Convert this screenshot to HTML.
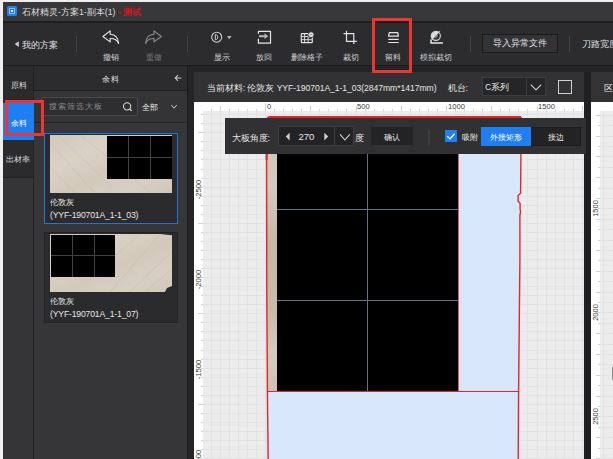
<!DOCTYPE html>
<html><head><meta charset="utf-8">
<style>
*{margin:0;padding:0;box-sizing:border-box}
html,body{width:613px;height:459px;overflow:hidden;background:#efefef;font-family:"Liberation Sans",sans-serif;}
.a{position:absolute}
.t{position:absolute;white-space:nowrap;color:#e6e6e6}
.ic{position:absolute;overflow:visible}
.rl{font-size:7.6px;line-height:9px;color:#3a3a3a}
.rv{transform:rotate(-90deg);transform-origin:center center}
</style></head><body>
<div class="a" style="left:3px;top:2px;width:610px;height:457px;background:#2b2b2b"></div>
<div class="a" style="left:3px;top:2px;width:610px;height:19px;background:#38383a"></div>
<div class="a" style="left:7px;top:6px;width:10px;height:10px;background:#1e82f5;border-radius:1.5px"></div>
<div class="a" style="left:8.8px;top:8px;width:6.6px;height:5.8px;border:1px solid #86bbff"></div>
<div class="a" style="left:10.8px;top:10px;width:2.6px;height:2.2px;background:#ffffff"></div>
<div class="t" style="left:22px;top:6.8px;font-size:8.8px;line-height:10.8px;color:#dcdcdc;">石材精灵-方案1-副本(1) <span style="color:#d2161c;font-weight:bold">- 测试</span></div>
<div class="a" style="left:3px;top:21px;width:610px;height:2px;background:#1e1e1e"></div>
<div class="a" style="left:3px;top:23px;width:610px;height:42px;background:#2c2c2e"></div>
<svg class="ic" style="left:0;top:0" width="613" height="70" viewBox="0 0 613 70" fill="none" stroke-linejoin="round"><path d="M18.8 41.2 V46.9 L14.8 44.05 Z" fill="#d0d0d0"/></svg>
<div class="t" style="left:22px;top:39.6px;font-size:8.8px;line-height:10.8px;color:#e0e0e0;">我的方案</div>
<div class="a" style="left:76px;top:36px;width:1px;height:16px;background:#444446"></div>
<div class="a" style="left:187px;top:36px;width:1px;height:16px;background:#444446"></div>
<div class="a" style="left:470px;top:36px;width:1px;height:16px;background:#444446"></div>
<div class="a" style="left:569px;top:36px;width:1px;height:16px;background:#444446"></div>
<div class="t" style="left:51.2px;width:120px;text-align:center;top:52.6px;font-size:7.6px;line-height:9.6px;color:#d0d0d0;">撤销</div>
<div class="t" style="left:94px;width:120px;text-align:center;top:52.6px;font-size:7.6px;line-height:9.6px;color:#777;">重做</div>
<div class="t" style="left:162.3px;width:120px;text-align:center;top:52.6px;font-size:7.6px;line-height:9.6px;color:#d0d0d0;">显示</div>
<div class="t" style="left:204.2px;width:120px;text-align:center;top:52.6px;font-size:7.6px;line-height:9.6px;color:#d0d0d0;">放回</div>
<div class="t" style="left:247.3px;width:120px;text-align:center;top:52.6px;font-size:7.6px;line-height:9.6px;color:#d0d0d0;">删除格子</div>
<div class="t" style="left:290.5px;width:120px;text-align:center;top:52.6px;font-size:7.6px;line-height:9.6px;color:#d0d0d0;">裁切</div>
<div class="t" style="left:333.3px;width:120px;text-align:center;top:52.6px;font-size:7.6px;line-height:9.6px;color:#d0d0d0;">留料</div>
<div class="t" style="left:375.9px;width:120px;text-align:center;top:52.6px;font-size:7.6px;line-height:9.6px;color:#d0d0d0;">模拟裁切</div>
<svg class="ic" style="left:0;top:0" width="613" height="70" viewBox="0 0 613 70" fill="none" stroke-linejoin="round">
<path d="M110.2 30.9 L102.9 36.5 L110.2 41.9 V38.5 C114.5 38.3 117 40 118.6 43.4 C118 37.5 114.8 34.5 110.2 34.3 Z" stroke="#e4e4e4" stroke-width="1.15"/>
<path transform="translate(264.2 0) scale(-1 1)" d="M110.2 30.9 L102.9 36.5 L110.2 41.9 V38.5 C114.5 38.3 117 40 118.6 43.4 C118 37.5 114.8 34.5 110.2 34.3 Z" stroke="#8c8c8c" stroke-width="1.15"/>
<circle cx="216.7" cy="37.2" r="5" stroke="#cfcfcf" stroke-width="1.1"/>
<path d="M215.3 34.6 V39.8 C218.6 39.8 218.6 34.6 215.3 34.6 Z" stroke="#cfcfcf" stroke-width="1"/>
<path d="M226.9 35.9 H231.6 L229.25 39.3 Z" fill="#b0b0b0"/>
<path d="M258.4 33.8 V31.3 H270.5 V43.2 H258.4 V38.8" stroke="#e4e4e4" stroke-width="1.2"/>
<path d="M259 36.2 H265" stroke="#b8b8b8" stroke-width="2"/>
<path d="M264.5 33.3 L268.3 36.2 L264.5 39.1 Z" fill="#b8b8b8"/>
<rect x="301.3" y="33.7" width="11" height="9" rx="0.8" stroke="#e4e4e4" stroke-width="1.2"/>
<path d="M301.3 36.6 H312.3 M301.3 39.7 H312.3 M304.6 33.7 V42.7 M308.2 33.7 V42.7" stroke="#e4e4e4" stroke-width="0.9"/>
<circle cx="311.1" cy="34.7" r="2.9" fill="#e4e4e4" stroke="#2c2c2e" stroke-width="0.8"/>
<path d="M309.8 34.7 H312.4" stroke="#8a8a8a" stroke-width="0.9"/>
<path d="M346.5 30.8 V41.3 H356.9 M343.5 33.7 H353.8 V44" stroke="#e4e4e4" stroke-width="1.2" stroke-linejoin="miter"/>
<path d="M389.3 32.5 H397.7 L398.4 36.2 H388.6 Z" stroke="#e4e4e4" stroke-width="1.25"/>
<path d="M388.3 39.4 H398.7 M388.3 42.5 H398.7" stroke="#e4e4e4" stroke-width="1.2"/>
<path d="M439.3 32.3 A5 5 0 0 0 432.3 39.3 Z" fill="#e0e0e0"/>
<circle cx="435.8" cy="35.8" r="4.6" stroke="#d8d8d8" stroke-width="1.1"/>
<circle cx="435.8" cy="35.8" r="1.4" stroke="#bdbdbd" stroke-width="0.9"/>
<path d="M431.5 40.3 L439.9 30.9" stroke="#cfcfcf" stroke-width="0.9"/>
<path d="M431 39.5 V42.9 H442.9" stroke="#e4e4e4" stroke-width="1.5"/>
</svg>
<div class="a" style="left:482px;top:34px;width:76px;height:19px;background:#333335;border:1px solid #1b1b1b;border-radius:1px"></div>
<div class="t" style="left:459.6px;width:120px;text-align:center;top:38px;font-size:8.7px;line-height:10.7px;color:#e0e0e0;">导入异常文件</div>
<div class="t" style="left:582px;top:39px;font-size:9px;line-height:11px;color:#e6e6e6;">刀路宽度</div>
<div class="a" style="left:3px;top:65px;width:610px;height:1px;background:#1c1c1c"></div>
<div class="a" style="left:3px;top:66px;width:30px;height:393px;background:#353537"></div>
<div class="a" style="left:3px;top:66px;width:30px;height:111px;background:#2b2b2d"></div>
<div class="a" style="left:3px;top:177px;width:30px;height:1px;background:#202022"></div>
<div class="a" style="left:33px;top:66px;width:1px;height:393px;background:#222224"></div>
<div class="t" style="left:-41.5px;width:120px;text-align:center;top:81px;font-size:8px;line-height:10px;color:#dcdcdc;">原料</div>
<div class="a" style="left:3px;top:103px;width:31px;height:37px;background:#1e7ef2"></div>
<div class="t" style="left:-41.5px;width:120px;text-align:center;top:118.5px;font-size:8px;line-height:10px;color:#ffffff;">余料</div>
<div class="t" style="left:-41.7px;width:120px;text-align:center;top:155.2px;font-size:8px;line-height:10px;color:#dcdcdc;">出材率</div>
<div class="a" style="left:34px;top:66px;width:153px;height:393px;background:#363638"></div>
<div class="a" style="left:34px;top:66px;width:153px;height:24px;background:#2c2c2e"></div>
<div class="a" style="left:34px;top:90px;width:153px;height:1px;background:#1e1e1e"></div>
<div class="t" style="left:51.3px;width:120px;text-align:center;top:74.3px;font-size:8.3px;line-height:10.3px;color:#e0e0e0;letter-spacing:1px">余料</div>
<div class="a" style="left:34px;top:91px;width:153px;height:31px;background:#343436"></div>
<div class="a" style="left:41px;top:97px;width:97px;height:19px;border:1px solid #4a4a4c;border-radius:2px;background:#2e2e30"></div>
<div class="t" style="left:49.3px;top:101.3px;font-size:8.3px;line-height:10.3px;color:#8a8a8a;letter-spacing:0.85px">搜索筛选大板</div>
<div class="t" style="left:141.7px;top:101.8px;font-size:8.3px;line-height:10.3px;color:#e6e6e6;letter-spacing:0.6px">全部</div>
<div class="a" style="left:34px;top:122px;width:153px;height:1px;background:#252527"></div>
<svg class="ic" style="left:0;top:0" width="200" height="130" viewBox="0 0 200 130" fill="none"><path d="M181.4 78 H175.5 M178 75.2 L175.2 78 L178 80.8" stroke="#c8c8c8" stroke-width="1.1"/><circle cx="127.1" cy="106.3" r="3.6" stroke="#e0e0e0" stroke-width="1.05"/><path d="M129.8 109 L131.7 110.9" stroke="#e0e0e0" stroke-width="1.2"/><path d="M171.3 105 L174 108.2 L176.8 105" stroke="#c8c8c8" stroke-width="1"/></svg>
<div class="a" style="left:187px;top:66px;width:7px;height:393px;background:#252527"></div>
<div class="a" style="left:187px;top:66px;width:1px;height:393px;background:#1b1b1b"></div>
<div class="a" style="left:44px;top:133px;width:134px;height:91px;background:#2b2b2d;border:1px solid #1f72e0"></div>
<svg class="a" style="left:50px;top:135px" width="122" height="58" viewBox="0 0 122 58"><defs><linearGradient id="mg1" x1="0" y1="0" x2="1" y2="1"><stop offset="0" stop-color="#d3c9bb"/><stop offset="0.3" stop-color="#dad2c6"/><stop offset="0.55" stop-color="#d3c9bb"/><stop offset="0.8" stop-color="#d8cfc3"/><stop offset="1" stop-color="#d0c6b8"/></linearGradient></defs><rect width="122" height="58" fill="url(#mg1)"/><path d="M0 8 L45 58 M8 0 L62 52.2 M30 0 L70 31.900000000000002 M55 17.4 L100 58 M80 0 L122 34.8 M0 31.900000000000002 L25 58" stroke="#b3a694" stroke-width="0.7" opacity="0.35" fill="none"/></svg>
<div class="a" style="left:107px;top:136px;width:65px;height:43px;background:#000"></div>
<div class="a" style="left:128px;top:136px;width:1px;height:43px;background:#43433b"></div>
<div class="a" style="left:150px;top:136px;width:1px;height:43px;background:#43433b"></div>
<div class="a" style="left:107px;top:157px;width:65px;height:1px;background:#43433b"></div>
<div class="t" style="left:50.3px;top:198px;font-size:8px;line-height:10px;color:#e6e6e6;">伦敦灰</div>
<div class="t" style="left:50px;top:209.5px;font-size:8.7px;line-height:10.7px;color:#e6e6e6;letter-spacing:-0.2px">(YYF-190701A_1-1_03)</div>
<div class="a" style="left:44px;top:232px;width:134px;height:91px;background:#2b2b2d;border:1px solid #222224"></div>
<svg class="a" style="left:50px;top:234px" width="122" height="58" viewBox="0 0 122 58"><defs><linearGradient id="mg2" x1="0" y1="0" x2="1" y2="1"><stop offset="0" stop-color="#d3c9bb"/><stop offset="0.3" stop-color="#dad2c6"/><stop offset="0.55" stop-color="#d3c9bb"/><stop offset="0.8" stop-color="#d8cfc3"/><stop offset="1" stop-color="#d0c6b8"/></linearGradient></defs><rect width="122" height="58" fill="url(#mg2)"/><path d="M60 58 L110 0 M80 58 L122 17.4 M0 40.599999999999994 L40 17.4 M95 58 L122 34.8 M50 34.8 L90 0" stroke="#b3a694" stroke-width="0.7" opacity="0.35" fill="none"/><path d="M115 58 L117 54 L122 52 L122 58 Z" fill="#2b2b2d"/><path d="M110 0 L122 0 L122 1.2 Z" fill="#2b2b2d"/></svg>
<div class="a" style="left:51px;top:235px;width:64px;height:42px;background:#000"></div>
<div class="a" style="left:72px;top:235px;width:1px;height:42px;background:#43433b"></div>
<div class="a" style="left:94px;top:235px;width:1px;height:42px;background:#43433b"></div>
<div class="a" style="left:51px;top:255px;width:64px;height:1px;background:#43433b"></div>
<div class="t" style="left:50.3px;top:297px;font-size:8px;line-height:10px;color:#e6e6e6;">伦敦灰</div>
<div class="t" style="left:50px;top:308.5px;font-size:8.7px;line-height:10.7px;color:#e6e6e6;letter-spacing:-0.2px">(YYF-190701A_1-1_07)</div>
<div class="a" style="left:194px;top:66px;width:419px;height:6px;background:#242426"></div>
<svg class="a" style="left:194px;top:102px" width="390" height="357" viewBox="0 0 390 357" shape-rendering="crispEdges">
<rect x="0" y="0" width="390" height="357" fill="#ffffff"/>
<rect x="9" y="9" width="381" height="348" fill="#ececec"/>
<path d="M17.5 9V357M26.5 9V357M35.5 9V357M44.5 9V357M53.5 9V357M62.5 9V357M71.5 9V357M80.5 9V357M89.5 9V357M98.5 9V357M107.5 9V357M116.5 9V357M125.5 9V357M134.5 9V357M143.5 9V357M152.5 9V357M162.5 9V357M171.5 9V357M180.5 9V357M189.5 9V357M198.5 9V357M207.5 9V357M216.5 9V357M225.5 9V357M234.5 9V357M243.5 9V357M252.5 9V357M261.5 9V357M270.5 9V357M279.5 9V357M288.5 9V357M297.5 9V357M306.5 9V357M315.5 9V357M324.5 9V357M333.5 9V357M343.5 9V357M352.5 9V357M361.5 9V357M370.5 9V357M379.5 9V357M388.5 9V357M9 12.5H390M9 21.5H390M9 30.5H390M9 39.5H390M9 48.5H390M9 57.5H390M9 67.5H390M9 76.5H390M9 85.5H390M9 94.5H390M9 103.5H390M9 112.5H390M9 121.5H390M9 130.5H390M9 139.5H390M9 148.5H390M9 157.5H390M9 166.5H390M9 175.5H390M9 184.5H390M9 193.5H390M9 202.5H390M9 211.5H390M9 220.5H390M9 229.5H390M9 238.5H390M9 248.5H390M9 257.5H390M9 266.5H390M9 275.5H390M9 284.5H390M9 293.5H390M9 302.5H390M9 311.5H390M9 320.5H390M9 329.5H390M9 338.5H390M9 347.5H390M9 356.5H390" stroke="#e3e3e3" stroke-width="1" fill="none"/>
<path d="M17.5 7V9M26.5 4V9M35.5 7V9M44.5 7V9M53.5 7V9M62.5 7V9M71.5 1V9M80.5 7V9M89.5 7V9M98.5 7V9M107.5 7V9M116.5 4V9M125.5 7V9M134.5 7V9M143.5 7V9M152.5 7V9M162.5 4V9M171.5 7V9M180.5 7V9M189.5 7V9M198.5 7V9M207.5 4V9M216.5 7V9M225.5 7V9M234.5 7V9M243.5 7V9M252.5 4V9M261.5 7V9M270.5 7V9M279.5 7V9M288.5 7V9M297.5 4V9M306.5 7V9M315.5 7V9M324.5 7V9M333.5 7V9M343.5 4V9M352.5 7V9M361.5 7V9M370.5 7V9M379.5 7V9M388.5 4V9M7 12.5H9M7 21.5H9M4 30.5H9M7 39.5H9M7 48.5H9M7 57.5H9M7 67.5H9M7 76.5H9M7 85.5H9M7 94.5H9M7 103.5H9M7 112.5H9M4 121.5H9M7 130.5H9M7 139.5H9M7 148.5H9M7 157.5H9M7 166.5H9M7 175.5H9M7 184.5H9M7 193.5H9M7 202.5H9M4 211.5H9M7 220.5H9M7 229.5H9M7 238.5H9M7 248.5H9M7 257.5H9M7 266.5H9M7 275.5H9M7 284.5H9M7 293.5H9M4 302.5H9M7 311.5H9M7 320.5H9M7 329.5H9M7 338.5H9M7 347.5H9M7 356.5H9" stroke="#d4d4d4" stroke-width="1" fill="none"/>
</svg>
<div class="a" style="left:267px;top:117px;width:253px;height:342px;background:#d8e7f9"></div>
<svg class="a" style="left:267px;top:117px" width="10" height="274" viewBox="0 0 10 274"><defs><linearGradient id="bs" x1="0" y1="0" x2="0" y2="1"><stop offset="0" stop-color="#cfc4b6"/><stop offset="0.25" stop-color="#d4cabd"/><stop offset="0.45" stop-color="#c4b8a8"/><stop offset="0.7" stop-color="#c6baaa"/><stop offset="0.86" stop-color="#d4cabd"/><stop offset="1" stop-color="#cdc3b5"/></linearGradient></defs><rect width="10" height="274" fill="url(#bs)"/></svg>
<div class="a" style="left:277px;top:117px;width:181px;height:274px;background:#000"></div>
<div class="a" style="left:458px;top:117px;width:1px;height:274px;background:#ea5a60"></div>
<div class="a" style="left:367px;top:117px;width:1px;height:274px;background:#63718a"></div>
<div class="a" style="left:277px;top:209px;width:181px;height:1px;background:#63718a"></div>
<div class="a" style="left:277px;top:300px;width:181px;height:1px;background:#63718a"></div>
<div class="a" style="left:267px;top:391px;width:252px;height:1px;background:#e9222c"></div>
<svg class="a" style="left:0;top:0" width="613" height="459" viewBox="0 0 613 459" fill="none"><path d="M268.2 459 L267.5 400 L266.8 300 L266.6 160 L266.6 121.5 Q266.6 117 271 117 L521 117" stroke="#e9222c" stroke-width="1.4"/><path d="M266.6 160 L266.6 121.5 Q266.6 117 271 117 L521 117" stroke="#e9222c" stroke-width="2"/><path d="M521.2 117 L520.6 193.2 L518.1 195.6 L518.1 201.3 L520.1 203.3 L520.1 209 L520.6 212 L519.9 215 L519.9 260 L518.6 390 L518.2 459" stroke="#e9222c" stroke-width="1.4"/></svg>
<div class="a" style="left:194px;top:72px;width:390px;height:30px;background:#323234"></div>
<div class="t" style="left:207px;top:83px;font-size:8.6px;line-height:10.6px;color:#e6e6e6;letter-spacing:-0.05px">当前材料: 伦敦灰 YYF-190701A_1-1_03(2847mm*1417mm)</div>
<div class="t" style="left:447.5px;top:83px;font-size:8.6px;line-height:10.6px;color:#e6e6e6;">机台:</div>
<div class="a" style="left:482px;top:77px;width:64px;height:19px;background:#252527;border:1px solid #3c3c3e"></div>
<div class="a" style="left:526px;top:77px;width:1px;height:19px;background:#3c3c3e"></div>
<div class="t" style="left:485px;top:82px;font-size:8.6px;line-height:10.6px;color:#e6e6e6;">C系列</div>
<svg class="ic" style="left:0;top:0" width="613" height="100" viewBox="0 0 613 100" fill="none"><path d="M530.8 84.6 L536 89.9 L541.2 84.6" stroke="#d0d0d0" stroke-width="1.1"/></svg>
<div class="a" style="left:558px;top:80.3px;width:13.6px;height:13.6px;border:1.5px solid #cfcfcf"></div>
<div class="a" style="left:584px;top:72px;width:7px;height:387px;background:#202022"></div>
<svg class="a" style="left:591px;top:102px" width="22" height="357" viewBox="0 0 22 357" shape-rendering="crispEdges">
<rect x="0" y="0" width="22" height="357" fill="#ffffff"/>
<rect x="9" y="9" width="13" height="348" fill="#ececec"/>
<path d="M12.5 9V357M9 13.5H22M9 23.5H22M9 34.5H22M9 44.5H22M9 54.5H22M9 65.5H22M9 75.5H22M9 86.5H22M9 96.5H22M9 106.5H22M9 117.5H22M9 127.5H22M9 138.5H22M9 148.5H22M9 158.5H22M9 169.5H22M9 179.5H22M9 190.5H22M9 200.5H22M9 210.5H22M9 221.5H22M9 231.5H22M9 242.5H22M9 252.5H22M9 262.5H22M9 273.5H22M9 283.5H22M9 294.5H22M9 304.5H22M9 314.5H22M9 325.5H22M9 335.5H22M9 346.5H22M9 356.5H22" stroke="#e3e3e3" stroke-width="1" fill="none"/>
<path d="M5 13.5H9M7 23.5H9M5 34.5H9M7 44.5H9M5 54.5H9M7 65.5H9M5 75.5H9M7 86.5H9M5 96.5H9M7 106.5H9M5 117.5H9M7 127.5H9M7 138.5H9M5 148.5H9M7 158.5H9M5 169.5H9M7 179.5H9M5 190.5H9M7 200.5H9M5 210.5H9M7 221.5H9M5 231.5H9M7 242.5H9M5 252.5H9M7 262.5H9M5 273.5H9M7 283.5H9M5 294.5H9M7 304.5H9M5 314.5H9M7 325.5H9M5 335.5H9M7 346.5H9M5 356.5H9" stroke="#d4d4d4" stroke-width="1" fill="none"/>
<rect x="21" y="265" width="1.5" height="13" fill="#8a8a8a"/>
</svg>
<div class="a" style="left:591px;top:72px;width:22px;height:30px;background:#333335"></div>
<div class="t" style="left:603.6px;top:82.8px;font-size:8.8px;line-height:10.8px;color:#e6e6e6;">区域</div>
<div class="t rl" style="left:267px;top:102px">0</div>
<div class="t rl" style="left:357px;top:102px">500</div>
<div class="t rl" style="left:448px;top:102px">1000</div>
<div class="t rl" style="left:538px;top:102px">1500</div>
<div class="t rl rv" style="left:168.2px;width:60px;text-align:center;top:185.1px">-2500</div>
<div class="t rl rv" style="left:168.2px;width:60px;text-align:center;top:275.1px">-2000</div>
<div class="t rl rv" style="left:168.2px;width:60px;text-align:center;top:365.1px">-1500</div>
<div class="t rl rv" style="left:168.2px;width:60px;text-align:center;top:455.1px">-1000</div>
<div class="t rl rv" style="left:565px;width:60px;text-align:center;top:203.6px;font-size:7.5px">1500</div>
<div class="t rl rv" style="left:565px;width:60px;text-align:center;top:307.9px;font-size:7.5px">2000</div>
<div class="t rl rv" style="left:565px;width:60px;text-align:center;top:412.0px;font-size:7.5px">2500</div>
<div class="a" style="left:225px;top:118px;width:361px;height:36px;background:#313133"></div>
<div class="t" style="left:231.5px;top:132.5px;font-size:8.8px;line-height:10.8px;color:#e6e6e6;">大板角度:</div>
<div class="a" style="left:278px;top:126px;width:76px;height:20px;background:#232325;border:1px solid #3e3e40"></div>
<div class="a" style="left:334px;top:126px;width:1px;height:20px;background:#3e3e40"></div>
<div class="t" style="left:298.4px;top:131.3px;font-size:9.6px;line-height:11.6px;color:#e6e6e6;">270</div>
<svg class="ic" style="left:0;top:0" width="613" height="160" viewBox="0 0 613 160" fill="none"><path d="M289.6 132.7 L285.8 136.6 L289.6 140.6 Z" fill="#d0d0d0"/><path d="M324.3 132.7 L328.2 136.6 L324.3 140.6 Z" fill="#d0d0d0"/><path d="M340 134.3 L344.9 140 L349.8 134.3" stroke="#d0d0d0" stroke-width="1.1"/><path d="M447.3 136.2 L450 138.9 L454.6 133.8" stroke="#ffffff" stroke-width="1.3"/></svg>
<div class="t" style="left:354.5px;top:132.5px;font-size:8.5px;line-height:10.5px;color:#e6e6e6;">度</div>
<div class="a" style="left:371px;top:127px;width:42px;height:18px;background:#232325"></div>
<div class="t" style="left:332px;width:120px;text-align:center;top:132.5px;font-size:8px;line-height:10px;color:#e6e6e6;">确认</div>
<div class="a" style="left:428px;top:130px;width:2px;height:15px;background:#3e3e40"></div>
<div class="a" style="left:445px;top:130px;width:12px;height:12px;background:#1e7ef2"></div>
<svg class="ic" style="left:0;top:0" width="613" height="160" viewBox="0 0 613 160" fill="none"><path d="M447.3 136.2 L450 138.9 L454.6 133.8" stroke="#ffffff" stroke-width="1.3"/></svg>
<div class="t" style="left:462px;top:132.5px;font-size:8px;line-height:10px;color:#e6e6e6;">吸附</div>
<div class="a" style="left:481px;top:127px;width:100px;height:19px;background:#232325;border:1px solid #1c1c1c"></div>
<div class="a" style="left:481px;top:127px;width:50px;height:19px;background:#1e7ef2"></div>
<div class="t" style="left:446.1px;width:120px;text-align:center;top:132.5px;font-size:8px;line-height:10px;color:#ffffff;">外接矩形</div>
<div class="t" style="left:496px;width:120px;text-align:center;top:132.5px;font-size:8px;line-height:10px;color:#e6e6e6;">接边</div>
<div class="a" style="left:371.8px;top:17.8px;width:40.4px;height:55.2px;border:3.2px solid #ee3533"></div>
<div class="a" style="left:5px;top:99.8px;width:38.9px;height:36.1px;border:3.1px solid #ee3533"></div>
</body></html>
